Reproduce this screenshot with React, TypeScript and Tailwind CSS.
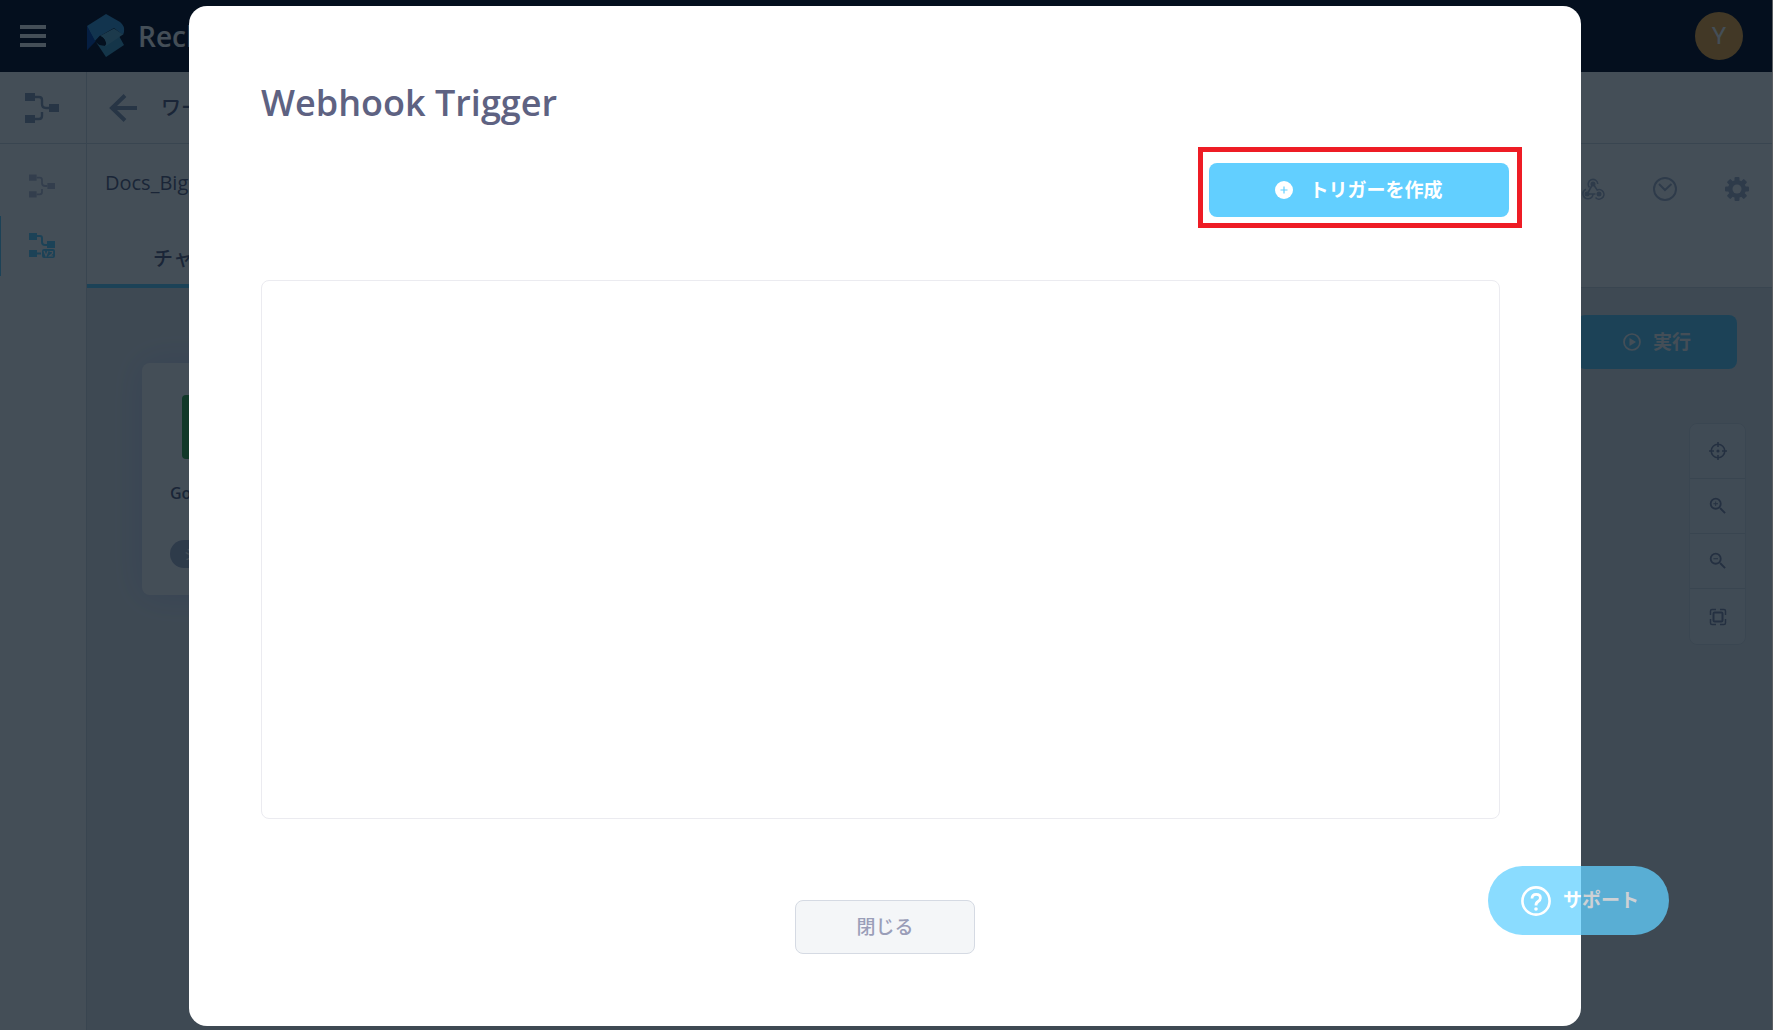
import React from 'react';
import { MdZoomIn, MdZoomOut } from 'react-icons/md';

type IconProps = { className?: string };

const Logo: React.FC<IconProps> = ({ className }) => (
  <svg className={className} viewBox="0 0 38 44" aria-hidden="true">
    <path d="M0 12 13 22 9 27 0 36Z" fill="#0440ac" />
    <path d="M0 12 19 0l14 8q5 4 4 10l-1 3-9-7-14 8-5 5Z" fill="#3898dc" />
    <path d="M0 12 8 27 0 36Z" fill="#0440ac" />
    <path d="M9 28q5 6 11 2l12-8 5 9-18 12Z" fill="#409cc8" />
    <path d="M13 22 27 14.500l9 6-17 11.500q1-7-6-10Z" fill="#60b0d4" />
    <path d="m8 27 5-5.500q7 4 5 10.500-5-1-10-5Z" fill="#000a20" />
  </svg>
);

const ArrowIcon: React.FC<IconProps> = ({ className }) => (
  <svg className={className} viewBox="0 0 28 28" fill="none" stroke="currentColor" strokeWidth="4" aria-hidden="true">
    <path d="M28 14H3M16 1.500 3 14l13 12.500" />
  </svg>
);

const FlowIcon: React.FC<IconProps> = ({ className }) => (
  <svg className={className} viewBox="0 0 34 32" aria-hidden="true">
    <path d="M0 1h10v8H0zM24 12h10v8H24zM0 23h10v8H0z" fill="currentColor" />
    <path d="M10 5h4q3 0 3 3v4q0 4 4 4h3M10 27h4q3 0 3-3v-4" fill="none" stroke="currentColor" strokeWidth="2.4" />
  </svg>
);

const FlowV2Icon: React.FC<IconProps> = ({ className }) => (
  <svg className={className} viewBox="0 0 26 26" aria-hidden="true">
    <path d="M0 0h8v7H0zM18 8h8v7h-8zM0 17h8v7H0z" fill="currentColor" />
    <path d="M8 3h3q2 0 2 2v4q0 3 3 3h2M8 20.500h4" fill="none" stroke="currentColor" strokeWidth="2" />
    <rect x="13" y="16" width="13" height="9" rx="2" fill="currentColor" />
    <path d="m15 18 2 5 2-5M20.500 18.500h3v2l-3 2.500h3.500" fill="none" stroke="#fff" strokeWidth="1.200" />
  </svg>
);

const WebhookIcon: React.FC<IconProps> = ({ className }) => (
  <svg className={className} viewBox="0 0 24 24" fill="none" stroke="currentColor" strokeWidth="1.600" aria-hidden="true">
    <circle cx="12" cy="7" r="2.500" fill="currentColor" stroke="none" />
    <circle cx="6" cy="17" r="2.500" fill="currentColor" stroke="none" />
    <circle cx="18" cy="17" r="2.500" fill="currentColor" stroke="none" />
    <path d="m11.500 7.500-5 9M12.500 7.500l4 6M6 17h8.500" />
    <path d="M8.500 10.500a4.800 4.800 0 1 1 8.300-3.500M16 13a4.800 4.800 0 1 1-1.500 7.500M12 17a5 5 0 1 1-7-4.800" />
  </svg>
);

const ClockIcon: React.FC<IconProps> = ({ className }) => (
  <svg className={className} viewBox="0 0 24 24" fill="none" stroke="currentColor" strokeWidth="2" aria-hidden="true">
    <circle cx="12" cy="12" r="11" />
    <path d="m6 7 6 6 6.500-6" />
  </svg>
);

const GearIcon: React.FC<IconProps> = ({ className }) => (
  <svg className={className} viewBox="0 0 24 24" aria-hidden="true">
    <g fill="currentColor">
      <rect x="9.500" width="5" height="24" rx="1" />
      <rect x="9.500" width="5" height="24" rx="1" transform="rotate(45 12 12)" />
      <rect x="9.500" width="5" height="24" rx="1" transform="rotate(90 12 12)" />
      <rect x="9.500" width="5" height="24" rx="1" transform="rotate(135 12 12)" />
      <circle cx="12" cy="12" r="9" />
    </g>
    <circle cx="12" cy="12" r="4.500" fill="#fff" />
  </svg>
);

const TargetIcon: React.FC<IconProps> = ({ className }) => (
  <svg className={className} viewBox="0 0 18 18" fill="none" stroke="currentColor" strokeWidth="1.600" aria-hidden="true">
    <circle cx="9" cy="9" r="6.800" />
    <path d="M9 0v5M9 13v5M0 9h5M13 9h5" />
    <circle cx="9" cy="9" r="1.600" fill="currentColor" stroke="none" />
  </svg>
);

const FitIcon: React.FC<IconProps> = ({ className }) => (
  <svg className={className} viewBox="0 0 18 18" fill="none" stroke="currentColor" strokeWidth="1.500" aria-hidden="true">
    <rect x="4.500" y="4.500" width="9" height="9" rx="1" strokeWidth="2" />
    <path d="M1.500 7V3q0-1.500 1.500-1.500h4M11 1.500h4q1.500 0 1.500 1.500v4M16.500 11v4q0 1.500-1.500 1.500h-4M7 16.500H3q-1.500 0-1.500-1.500v-4" />
  </svg>
);

const PlayIcon: React.FC<IconProps> = ({ className }) => (
  <svg className={className} viewBox="0 0 18 18" aria-hidden="true">
    <circle cx="9" cy="9" r="8" fill="none" stroke="currentColor" strokeWidth="1.700" />
    <path d="M6.500 5v8L13 9Z" fill="currentColor" />
  </svg>
);

const PlusIcon: React.FC<IconProps> = ({ className }) => (
  <svg className={className} viewBox="0 0 18 18" aria-hidden="true">
    <circle cx="9" cy="9" r="9" fill="#fff" />
    <path d="M9 5.500v7M5.500 9h7" stroke="#62cfff" strokeWidth="1.200" />
  </svg>
);

const HelpIcon: React.FC<IconProps> = ({ className }) => (
  <svg className={className} viewBox="0 0 30 30" fill="none" stroke="currentColor" aria-hidden="true">
    <circle cx="15" cy="15" r="13.600" strokeWidth="2.600" />
    <path d="M11 12.500q0-4.200 4.200-4.200t4.200 3.700q0 2-2.300 3.500T15 19.500" strokeWidth="2.800" />
    <circle cx="15" cy="23" r="1.800" fill="currentColor" stroke="none" />
  </svg>
);

const zoomControls = [
  { label: '中央に移動', icon: TargetIcon, className: 'size-[18px]' },
  { label: '拡大', icon: MdZoomIn, className: 'size-[22px]' },
  { label: '縮小', icon: MdZoomOut, className: 'size-[22px]' },
  { label: '全体を表示', icon: FitIcon, className: 'size-[18px]' },
];

const Header = () => (
  <header className="flex h-18 items-center bg-[#00061e] pr-[30px] pl-5">
    <button type="button" aria-label="メニュー" className="flex w-[26px] flex-col gap-[5px]">
      <span className="h-1 bg-white" />
      <span className="h-1 bg-white" />
      <span className="h-1 bg-white" />
    </button>
    <a href="#" className="ml-[41px] flex items-center gap-[13px] text-[28px] font-semibold text-white">
      <Logo className="h-11 w-[38px]" />
      <span>Reckoner</span>
    </a>
    <button type="button" className="ml-auto flex size-12 items-center justify-center rounded-full bg-[#f5a83c] font-[Roboto] text-2xl text-white">
      Y
    </button>
  </header>
);

const Sidebar = () => (
  <nav className="w-[87px] shrink-0 border-r border-[#d2dae2] bg-white">
    <div className="flex h-18 items-center border-b border-[#d2dae2] pl-[25px] text-[#8c9cb8]">
      <FlowIcon className="h-8 w-[34px]" />
    </div>
    <div className="pt-3">
      <a href="#" aria-label="ワークフロー" className="flex h-15 items-center pl-[29px] text-[#bcc0d6]">
        <FlowIcon className="h-[26px] w-[26px]" />
      </a>
      <a href="#" aria-label="ワークフロー V2" className="flex h-15 items-center border-l border-[#62cfff] pl-7 text-[#62cfff]">
        <FlowV2Icon className="size-[26px]" />
      </a>
    </div>
  </nav>
);

const Workspace = () => (
  <main className="flex min-w-0 flex-1 flex-col">
    <div className="flex h-18 items-center gap-6 border-b border-[#d2dae2] bg-white pl-[22px] text-xl font-medium text-[#5a5e80]">
      <button type="button" aria-label="戻る" className="text-[#8c9cb8]">
        <ArrowIcon className="size-7" />
      </button>
      <span>ワーク</span>
    </div>
    <div className="flex h-[90px] items-center justify-between bg-white pr-6 pl-[18px] text-[#5a5e80]">
      <span className="mb-3 text-xl">Docs_BigQuery</span>
      <div className="flex gap-12 text-[#a8b2cc]">
        <button type="button" aria-label="Webhook"><WebhookIcon className="size-6" /></button>
        <button type="button" aria-label="スケジュール"><ClockIcon className="size-6" /></button>
        <button type="button" aria-label="設定"><GearIcon className="size-6" /></button>
      </div>
    </div>
    <div className="flex h-[54px] border-b border-[#d2dae2] bg-white">
      <button type="button" className="h-[54px] w-[212px] border-b-4 border-[#62cfff] text-xl font-medium text-[#5a5e80]">
        チャート
      </button>
    </div>

    {/* Canvas */}
    <div className="relative flex-1 bg-[#e8ecf0]">
      <div className="absolute top-[75px] left-[55px] flex h-[232px] w-60 flex-col items-start rounded-lg bg-white pt-8 pl-7 shadow-[0_0_36px_#c8d2f4]">
        <div className="ml-3 size-16 rounded bg-[#34a84a]" />
        <p className="mt-[22px] text-base font-semibold text-[#5a5e80]">Google</p>
        <span className="mt-[35px] flex h-7 items-center rounded-full bg-[#a8b2cc] px-[14px] text-sm text-white">シート</span>
      </div>
      <button type="button" className="absolute top-[27px] right-9 flex h-[54px] w-40 items-center justify-center gap-3 rounded-lg bg-[#62cfff] text-[19px] font-bold text-white">
        <PlayIcon className="size-[18px]" />
        実行
      </button>
      <div className="absolute top-[135px] right-[27px] w-[57px] divide-y divide-[#d2dae2] rounded-lg border border-[#d8dfe6] bg-[#f0f3f6] text-[#8088a8]">
        {zoomControls.map(({ label, icon: Icon, className }) => (
          <button key={label} type="button" aria-label={label} className="flex h-[55px] w-full items-center justify-center">
            <Icon className={className} />
          </button>
        ))}
      </div>
    </div>
  </main>
);

const TriggerDialog = () => (
  <div className="fixed inset-0 flex border-r border-[#5a5e62] bg-[#05131f]/75 pt-1.5 pr-[191px] pb-1 pl-[189px]">
    <section role="dialog" aria-labelledby="dialog-title" className="flex flex-1 flex-col rounded-[18px] bg-white px-18 pt-18 pb-18">
      <h1 id="dialog-title" className="text-4xl leading-[50px] font-semibold text-[#5e6282]">Webhook Trigger</h1>
      <div className="-mr-[13px] mt-[19px] self-end border-[5px] border-[#ee1c25] px-2 pt-[11px] pb-[6px] pl-[6px]">
        <button type="button" className="flex h-[54px] w-[300px] items-center justify-center gap-4 rounded-lg bg-[#62cfff] text-[19px] font-bold text-white">
          <PlusIcon className="size-[18px]" />
          トリガーを作成
        </button>
      </div>
      <div className="mt-[52px] mr-[9px] flex-1 rounded-lg border border-[#ebebf0]" />
      <button type="button" className="mt-[81px] h-[54px] w-45 self-center rounded-lg border border-[#d5dae3] bg-[#f4f6f8] text-[19px] font-medium text-[#9a9eb8]">
        閉じる
      </button>
    </section>
  </div>
);

export default function App() {
  return (
    <div className="flex min-h-screen flex-col font-['Open_Sans','Noto_Sans_CJK_JP',sans-serif]">
      <Header />
      <div className="flex flex-1">
        <Sidebar />
        <Workspace />
      </div>
      <TriggerDialog />
      <button type="button" className="fixed right-[104px] bottom-[95px] flex h-[69px] w-[181px] items-center gap-3 rounded-full bg-[#63d0ff] pl-[33px] text-[19px] font-bold text-white opacity-75">
        <HelpIcon className="size-[30px]" />
        サポート
      </button>
    </div>
  );
}
